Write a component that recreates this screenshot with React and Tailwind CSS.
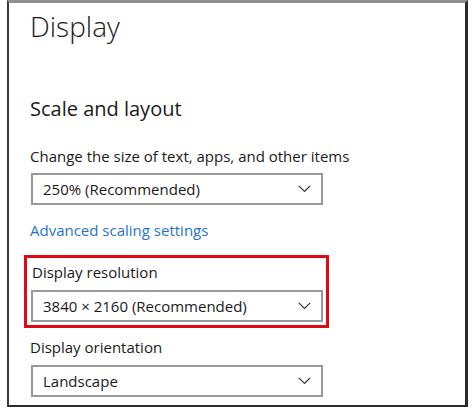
import React from 'react';

const Chevron = () => (
  <svg width="13" height="8" viewBox="0 0 13 8" fill="none" className="shrink-0">
    <path d="M0.8 0.8 L6.5 6.5 L12.2 0.8" stroke="#333" strokeWidth="1.2" />
  </svg>
);

const Dropdown = ({ value }) => (
  <div className="flex h-[32px] w-[292px] items-center justify-between border-2 border-[#999999] bg-white pl-[10px] pr-[10px]">
    <span className="text-[15px] leading-[20px] text-[#1a1a1a]">{value}</span>
    <Chevron />
  </div>
);

const App = () => {
  return (
    <div className="h-[412px] w-[474px] bg-white" style={{ fontFamily: '"Open Sans", "Noto Sans", sans-serif' }}>
      <div className="ml-[7px] h-[407px] w-[461px] border-t-[3px] border-l-2 border-r-[3px] border-b-2 border-t-[#8f8f8f] border-l-[#3a3a3a] border-r-[#2a2a2a] border-b-[#2a2a2a] bg-white">
        <div className="flex flex-col pl-[21px] text-[#1a1a1a]">
          {/* Page title */}
          <h1 className="mt-[5px] text-[28px] font-light leading-[36px]">Display</h1>

          {/* Scale and layout */}
          <h2 className="mt-[51px] text-[20px] font-normal leading-[28px]">Scale and layout</h2>
          <p className="mt-[23px] text-[15px] leading-[20px]">Change the size of text, apps, and other items</p>
          <div className="mt-[7px] ml-[1px]">
            <Dropdown value="250% (Recommended)" />
          </div>
          <a className="mt-[15px] text-[15px] leading-[20px] text-[#1f74c9]">Advanced scaling settings</a>

          {/* Highlighted resolution */}
          <div className="-ml-[6px] mt-[15px] w-[305px] border-[3px] border-[#e30613] pl-[4px] pr-[3px] pt-[4px] pb-[3px]">
            <p className="ml-[1px] text-[15px] leading-[20px]">Display resolution</p>
            <div className="mt-[8px]">
              <Dropdown value="3840 × 2160 (Recommended)" />
            </div>
          </div>

          <p className="mt-[9px] text-[15px] leading-[20px]">Display orientation</p>
          <div className="mt-[8px] ml-[1px]">
            <Dropdown value="Landscape" />
          </div>
        </div>
      </div>
    </div>
  );
};

export default App;
